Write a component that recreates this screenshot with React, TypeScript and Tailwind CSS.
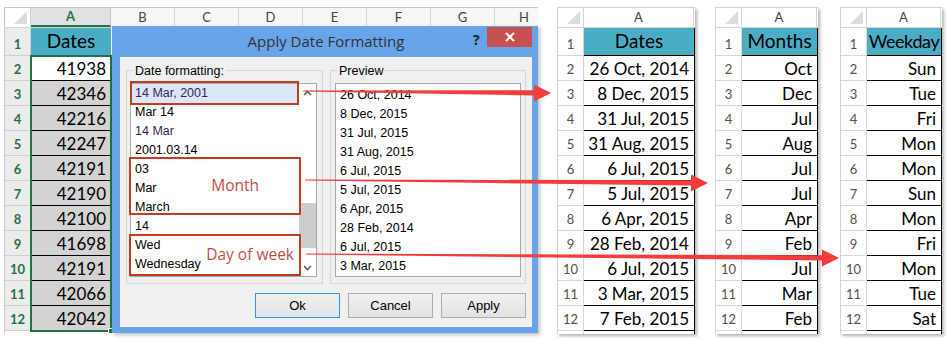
import React from 'react';

const serials = ['41938', '42346', '42216', '42247', '42191', '42190', '42100', '41698', '42191', '42066', '42042'];
const dates = ['26 Oct, 2014', '8 Dec, 2015', '31 Jul, 2015', '31 Aug, 2015', '6 Jul, 2015', '5 Jul, 2015', '6 Apr, 2015', '28 Feb, 2014', '6 Jul, 2015', '3 Mar, 2015', '7 Feb, 2015'];
const months = ['Oct', 'Dec', 'Jul', 'Aug', 'Jul', 'Jul', 'Apr', 'Feb', 'Jul', 'Mar', 'Feb'];
const weekdays = ['Sun', 'Tue', 'Fri', 'Mon', 'Mon', 'Sun', 'Mon', 'Fri', 'Mon', 'Tue', 'Sat'];

const formats = ['14 Mar, 2001', 'Mar 14', '14 Mar', '2001.03.14', '03', 'Mar', 'March', '14', 'Wed', 'Wednesday'];
const previews = ['26 Oct, 2014', '8 Dec, 2015', '31 Jul, 2015', '31 Aug, 2015', '6 Jul, 2015', '5 Jul, 2015', '6 Apr, 2015', '28 Feb, 2014', '6 Jul, 2015', '3 Mar, 2015'];

const cellFont = { fontFamily: 'Lato, "Liberation Sans", sans-serif' };
const uiFont = { fontFamily: '"Liberation Sans", Arial, sans-serif' };
const segoe = { fontFamily: '"Open Sans", "Noto Sans", sans-serif' };

// tapered arrow from (x0,y0) to tip (x1,y1)
function arrowPoints(x0: number, y0: number, x1: number, y1: number, head = 17) {
    const len = Math.hypot(x1 - x0, y1 - y0);
    const dx = (x1 - x0) / len;
    const dy = (y1 - y0) / len;
    const nx = -dy;
    const ny = dx;
    const bx = x1 - dx * head;
    const by = y1 - dy * head;
    const pts = [
        [x0 + nx * 0.6, y0 + ny * 0.6],
        [bx + nx * 2.6, by + ny * 2.6],
        [bx + nx * 8.5, by + ny * 8.5],
        [x1, y1],
        [bx - nx * 8.5, by - ny * 8.5],
        [bx - nx * 2.6, by - ny * 2.6],
        [x0 - nx * 0.6, y0 - ny * 0.6],
    ];
    return pts.map(p => `${p[0].toFixed(1)},${p[1].toFixed(1)}`).join(' ');
}

function Corner() {
    return (
        <div className="relative w-[26px] h-full border-r border-[#d4d4d4] bg-white">
            <svg className="absolute right-[3px] bottom-[3px]" width="13" height="13" viewBox="0 0 13 13">
                <polygon points="13,0 13,13 0,13" fill="#dcdcdc" />
            </svg>
        </div>
    );
}

function ResultSheet({ title, values, colClass, titleClass }: { title: string; values: string[]; colClass: string; titleClass: string }) {
    return (
        <div className="flex flex-col border-l border-t border-[#d4d4d4] shadow-[2px_2px_3px_rgba(0,0,0,0.3)] bg-white" style={cellFont}>
            <div className="flex h-[20px] border-b border-[#d4d4d4]">
                <Corner />
                <div className={`${colClass} flex items-center justify-center text-[13px] text-[#444] border-r border-[#d4d4d4]`}>A</div>
                <div className="flex-1" />
            </div>
            <div className="flex h-[28px]">
                <div className="w-[26px] flex items-end justify-center pb-[1px] text-[13px] text-[#5a504a] border-r border-b border-[#d8d8d8]">1</div>
                <div className={`${colClass} flex items-center justify-center overflow-hidden whitespace-nowrap bg-[#4bacc6] text-black border-b border-black ${titleClass}`}>
                    {title}
                </div>
                <div className="flex-1 border-l border-black" />
            </div>
            {values.map((v, i) => (
                <div key={i} className="flex h-[25px]">
                    <div className="w-[26px] flex items-end justify-center pb-[1px] text-[13px] text-[#5a504a] border-r border-b border-[#d8d8d8]">{i + 2}</div>
                    <div className={`${colClass} flex items-center justify-end pr-[5px] pt-[2px] text-[17px] text-black border-b border-black whitespace-nowrap`}>
                        {v}
                    </div>
                    <div className="flex-1 border-l border-black" />
                </div>
            ))}
            <div className="flex h-[3px]">
                <div className="w-[26px] border-r border-[#d8d8d8]" />
                <div className={colClass} />
                <div className="flex-1 border-l border-black" />
            </div>
        </div>
    );
}

function Chevron({ up }: { up?: boolean }) {
    return (
        <svg width="9" height="6" viewBox="0 0 9 6">
            <polyline
                points={up ? '1,5 4.5,1.5 8,5' : '1,1 4.5,4.5 8,1'}
                fill="none"
                stroke="#606060"
                strokeWidth={1.6}
            />
        </svg>
    );
}

function Button({ label, focused }: { label: string; focused?: boolean }) {
    return (
        <div
            className={`w-[85px] h-[25px] flex items-center justify-center text-[13px] text-black bg-gradient-to-b from-[#f0f0f0] to-[#e3e3e3] border ${focused ? 'border-[#3c8fd8]' : 'border-[#adadad]'}`}
            style={uiFont}
        >
            {label}
        </div>
    );
}

export default function App() {
    const cols = ['B', 'C', 'D', 'E', 'F', 'G'];
    return (
        <div className="relative w-[950px] h-[340px] bg-white overflow-hidden">
            <div className="flex pl-[4px] pt-[7px]">
                {/* Source sheet */}
                <div className="w-[534px] h-[326px] flex flex-col border-l border-t border-[#c8c8c8] bg-white" style={cellFont}>
                    <div className="flex h-[20px] border-b border-[#d4d4d4] bg-[#f7f7f7]">
                        <Corner />
                        <div className="w-[80px] flex items-center justify-center text-[13px] font-bold text-[#217346] bg-[#e1e1e1] border-r border-[#c8c8c8] border-b-2 border-b-[#217346]">A</div>
                        {cols.map(c => (
                            <div key={c} className="w-[64px] flex items-center justify-center text-[13px] text-[#444] border-r border-[#d4d4d4]">{c}</div>
                        ))}
                        <div className="flex-1 flex items-center justify-end pr-[9px] text-[13px] text-[#444]">H</div>
                    </div>
                    <div className="flex h-[28px]">
                        <div className="w-[26px] flex items-end justify-center pb-[1px] text-[13px] font-bold text-[#217346] bg-[#ececec] border-r border-b border-[#d0d0d0]">1</div>
                        <div className="w-[80px] flex items-center justify-center bg-[#4bacc6] text-[19px] text-black border-b border-black">Dates</div>
                        <div className="flex-1" />
                    </div>
                    <div className="relative flex flex-col">
                        {serials.map((v, i) => (
                            <div key={i} className="flex h-[25px]">
                                <div className="w-[26px] flex items-end justify-center pb-[1px] text-[13px] font-bold text-[#217346] bg-[#ececec] border-r border-b border-[#d0d0d0]">{i + 2}</div>
                                <div className={`w-[80px] flex items-center justify-end pr-[5px] pt-[2px] text-[17px] text-black border-b border-black ${i === 0 ? 'bg-white' : 'bg-[#d3d3d3]'}`}>
                                    {v}
                                </div>
                                <div className="flex-1" />
                            </div>
                        ))}
                        {/* selection outline */}
                        <div className="absolute left-[25px] top-[-1px] w-[82px] h-[277px] border-2 border-[#217346]" />
                        <div className="absolute left-[103px] top-[272px] w-[6px] h-[6px] bg-[#217346] border border-white" />
                    </div>
                </div>

                <div className="ml-[19px]">
                    <ResultSheet title="Dates" values={dates} colClass="w-[110px]" titleClass="text-[19px]" />
                </div>
                <div className="ml-[20px]">
                    <ResultSheet title="Months" values={months} colClass="w-[75px]" titleClass="text-[19px]" />
                </div>
                <div className="ml-[22px]">
                    <ResultSheet title="Weekday" values={weekdays} colClass="w-[74px]" titleClass="text-[18px] tracking-[-0.4px]" />
                </div>
            </div>

            {/* Dialog */}
            <div className="absolute left-[112px] top-[26px] w-[426px] h-[307px] bg-[#68a4ea] flex flex-col pl-[8px] pr-[6px] pb-[6px] shadow-[2px_2px_4px_rgba(0,0,0,0.25)]">
                <div className="relative h-[31px] flex items-center justify-center text-[15px] text-[#333]" style={segoe}>
                    Apply Date Formatting
                    <span className="absolute left-[353px] top-[3px] text-[14px] font-bold text-[#222]">?</span>
                    <div className="absolute left-[367px] top-[1px] w-[45px] h-[20px] bg-[#c75050] flex items-center justify-center">
                        <svg width="10" height="10" viewBox="0 0 10 10">
                            <path d="M1 1 L9 9 M9 1 L1 9" stroke="white" strokeWidth={2} />
                        </svg>
                    </div>
                </div>
                <div className="flex-1 bg-[#f0f0f0] flex flex-col px-[6px] pt-[13px]" style={uiFont}>
                    <div className="flex gap-[7px]">
                        {/* Date formatting group */}
                        <div className="relative w-[197px] h-[214px] border border-[#d5d5d5] pl-[3px] pt-[12px]">
                            <span className="absolute left-[6px] top-[-9px] px-[2px] bg-[#f0f0f0] text-[12.5px] text-black">Date formatting:</span>
                            <div className="w-[187px] h-[194px] border border-[#a8a8a8] bg-white flex">
                                <div className="flex-1 flex flex-col">
                                    {formats.map((f, i) => (
                                        <div
                                            key={i}
                                            className={`h-[19px] flex items-center pl-[4px] text-[12.5px] ${i === 0 ? 'bg-[#dbe7f9]' : ''} ${i === 0 || i === 2 ? 'text-[#3a1d55]' : 'text-black'}`}
                                        >
                                            {f}
                                        </div>
                                    ))}
                                </div>
                                <div className="w-[17px] flex flex-col bg-white">
                                    <div className="h-[17px] flex items-center justify-center"><Chevron up /></div>
                                    <div className="h-[102px]" />
                                    <div className="h-[45px] bg-[#cdcdcd]" />
                                    <div className="flex-1" />
                                    <div className="h-[17px] flex items-center justify-center"><Chevron /></div>
                                </div>
                            </div>
                        </div>
                        {/* Preview group */}
                        <div className="relative w-[196px] h-[214px] border border-[#d5d5d5] pl-[4px] pt-[12px]">
                            <span className="absolute left-[6px] top-[-9px] px-[2px] bg-[#f0f0f0] text-[12.5px] text-black">Preview</span>
                            <div className="w-[186px] h-[194px] border border-[#a8a8a8] bg-white flex flex-col pt-[2px]">
                                {previews.map((p, i) => (
                                    <div key={i} className="h-[19px] flex items-center pl-[4px] text-[12.5px] text-black">{p}</div>
                                ))}
                            </div>
                        </div>
                    </div>
                    <div className="flex justify-end gap-[8px] mt-[9px]">
                        <Button label="Ok" focused />
                        <Button label="Cancel" />
                        <Button label="Apply" />
                    </div>
                </div>
            </div>

            {/* Callout boxes */}
            <div className="absolute left-[130px] top-[81px] w-[169px] h-[24px] border-2 border-[#c23d1d]" />
            <div className="absolute left-[129px] top-[157px] w-[172px] h-[58px] border-2 border-[#c23d1d] flex items-center justify-end pr-[40px]">
                <span className="text-[15.5px] text-[#c0504d]" style={segoe}>Month</span>
            </div>
            <div className="absolute left-[129px] top-[234px] w-[172px] h-[42px] border-2 border-[#c23d1d] flex items-center justify-end pr-[5px]">
                <span className="text-[15.5px] text-[#c0504d]" style={segoe}>Day of week</span>
            </div>

            {/* Arrows */}
            <svg className="absolute left-0 top-0 pointer-events-none" width="950" height="340" viewBox="0 0 950 340">
                <polygon points={arrowPoints(303, 91, 551, 93)} fill="#f53b3b" />
                <polygon points={arrowPoints(305, 180, 708, 183)} fill="#f53b3b" />
                <polygon points={arrowPoints(306, 254, 839, 258)} fill="#f53b3b" />
            </svg>
        </div>
    );
}
